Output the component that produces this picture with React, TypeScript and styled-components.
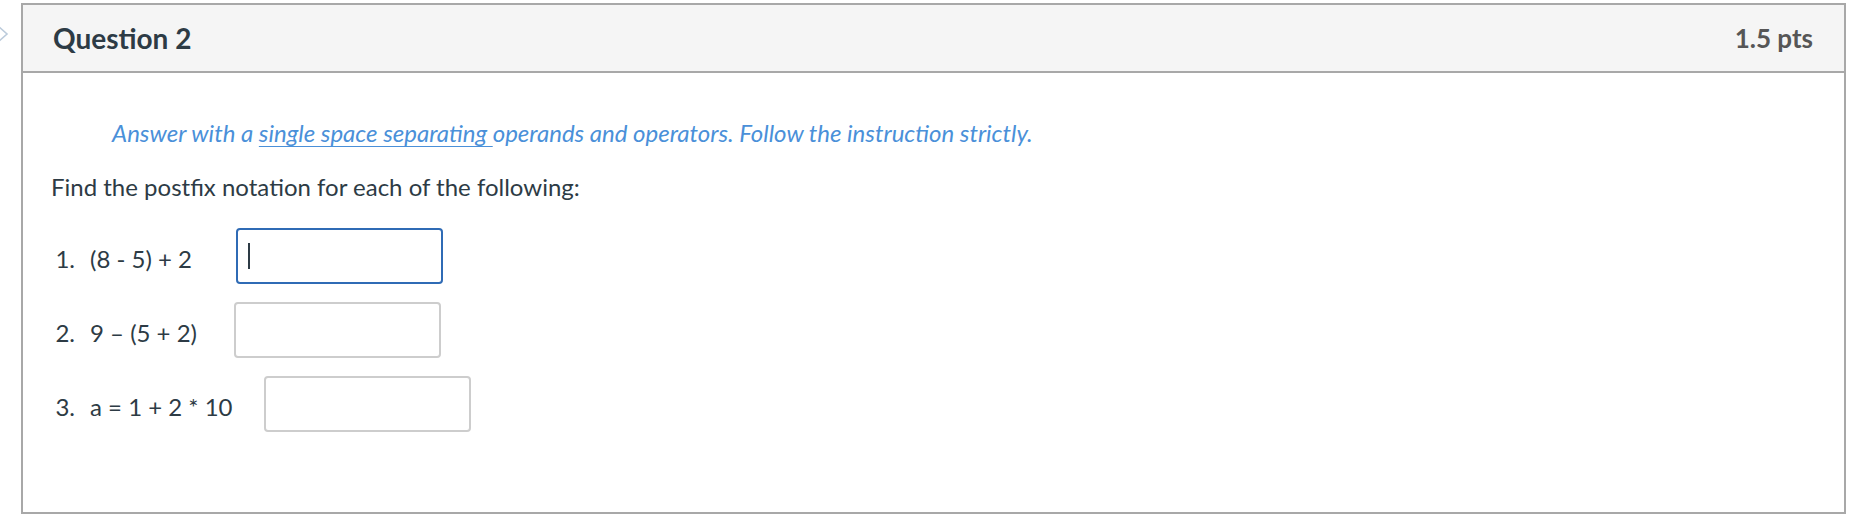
import React from "react";
import styled, { createGlobalStyle } from "styled-components";

const GlobalStyle = createGlobalStyle`
  html, body {
    margin: 0;
    padding: 0;
    background: #ffffff;
  }
  body {
    font-family: Lato, "Open Sans", "Liberation Sans", sans-serif;
    color: #2d3b45;
  }
`;

const Page = styled.div`
  display: flex;
  align-items: flex-start;
  padding-top: 3px;
  width: 1856px;
  height: 516px;
  box-sizing: border-box;
`;

const Gutter = styled.div`
  width: 21px;
  flex: none;
  padding-top: 22px;
  overflow: hidden;
`;

const Card = styled.div`
  width: 1825px;
  height: 511px;
  box-sizing: border-box;
  border: 2px solid #a8a8a8;
  display: flex;
  flex-direction: column;
`;

const Header = styled.div`
  height: 68px;
  box-sizing: border-box;
  background: #f5f5f5;
  border-bottom: 2px solid #a8a8a8;
  display: flex;
  align-items: center;
  justify-content: space-between;
  padding: 0 31px 0 30px;
`;

const Title = styled.h2`
  margin: 0;
  font-size: 28px;
  font-weight: 700;
  color: #2d3b45;
`;

const Points = styled.div`
  font-size: 26px;
  font-weight: 700;
  color: #565656;
`;

const Body = styled.div`
  padding: 43px 30px 0 28px;
  font-size: 24px;
  line-height: 33px;
`;

const Hint = styled.p`
  margin: 0 0 21px 0;
  padding-left: 61px;
  font-style: italic;
  color: #4a90d9;
`;

const Underlined = styled.span`
  text-decoration: underline;
  text-underline-offset: 4px;
  text-decoration-thickness: 1px;
`;

const Prompt = styled.p`
  margin: 0 0 25px 0;
`;

const List = styled.ol`
  list-style: none;
  margin: 0;
  padding: 0;
  display: flex;
  flex-direction: column;
  gap: 18px;
`;

const Item = styled.li`
  display: flex;
  align-items: flex-start;
`;

const Marker = styled.span`
  width: 24px;
  margin-right: 15px;
  text-align: right;
  padding-top: 14px;
`;

const Expr = styled.span<{ $gap: number }>`
  padding-top: 14px;
  margin-right: ${(p) => p.$gap}px;
`;

const Field = styled.div`
  position: relative;
`;

const Blank = styled.input<{ $focused?: boolean }>`
  display: block;
  width: 207px;
  height: 56px;
  box-sizing: border-box;
  border: 2px solid ${(p) => (p.$focused ? "#2f6bb5" : "#cdcdcd")};
  border-radius: 4px;
  background: #fff;
  font: inherit;
  outline: none;
  padding: 0 12px;
`;

const Caret = styled.span`
  position: absolute;
  left: 12px;
  top: 15px;
  width: 2px;
  height: 26px;
  background: #2d3b45;
`;

const items = [
  { expr: "(8 - 5) + 2", gap: 44, focused: true },
  { expr: "9 \u2013 (5 + 2)", gap: 37 },
  { expr: "a = 1 + 2 * 10", gap: 31 },
];

export default function App() {
  return (
    <>
      <GlobalStyle />
      <Page>
        <Gutter>
          <svg width="21" height="20" viewBox="0 0 21 20">
            <path d="M-2 1 L7 9 L-2 17" fill="none" stroke="#bccbdb" strokeWidth="1.6" />
          </svg>
        </Gutter>
        <Card>
          <Header>
            <Title>Question 2</Title>
            <Points>1.5 pts</Points>
          </Header>
          <Body>
            <Hint>
              Answer with a <Underlined>single space separating </Underlined>operands and
              operators. Follow the instruction strictly.
            </Hint>
            <Prompt>Find the postfix notation for each of the following:</Prompt>
            <List>
              {items.map((it, i) => (
                <Item key={i}>
                  <Marker>{i + 1}.</Marker>
                  <Expr $gap={it.gap}>{it.expr}</Expr>
                  <Field>
                    <Blank $focused={it.focused} readOnly />
                    {it.focused && <Caret />}
                  </Field>
                </Item>
              ))}
            </List>
          </Body>
        </Card>
      </Page>
    </>
  );
}
